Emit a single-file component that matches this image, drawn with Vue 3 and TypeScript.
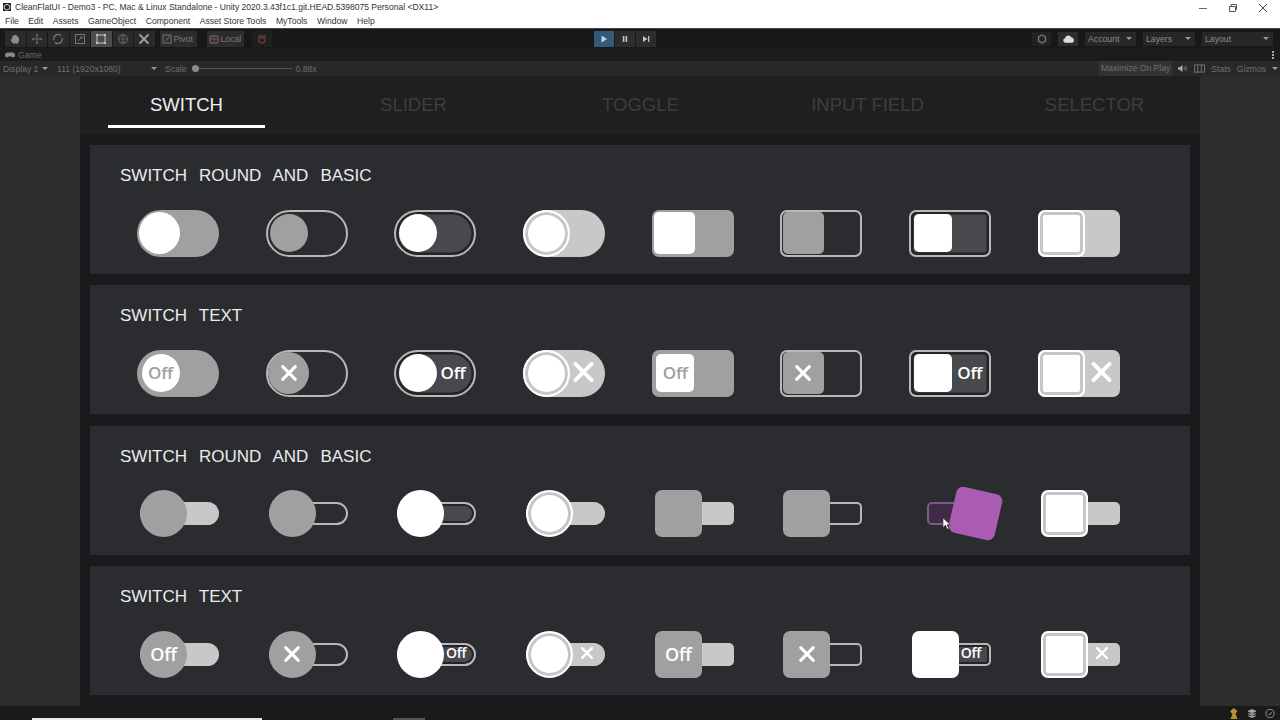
<script setup lang="ts">
type Style = 'fill' | 'outline' | 'inset' | 'ring'
type Label = 'none' | 'off' | 'x'

interface Cell {
  look: Style
  square: boolean
  label: Label
  moving?: boolean
}

interface Row {
  title: string
  small: boolean
  label: boolean
}

const rows: Row[] = [
  { title: 'SWITCH ROUND AND BASIC', small: false, label: false },
  { title: 'SWITCH TEXT', small: false, label: true },
  { title: 'SWITCH ROUND AND BASIC', small: true, label: false },
  { title: 'SWITCH TEXT', small: true, label: true }
]

const looks: Style[] = ['fill', 'outline', 'inset', 'ring']

function cellsFor(rowIndex: number, row: Row): Cell[] {
  const cells: Cell[] = []
  for (const square of [false, true]) {
    looks.forEach((look) => {
      let label: Label = 'none'
      if (row.label) label = look === 'fill' || look === 'inset' ? 'off' : 'x'
      cells.push({
        look,
        square,
        label,
        moving: rowIndex === 2 && square && look === 'inset'
      })
    })
  }
  return cells
}

const tabs = ['SWITCH', 'SLIDER', 'TOGGLE', 'INPUT FIELD', 'SELECTOR']
const menus = ['File', 'Edit', 'Assets', 'GameObject', 'Component', 'Asset Store Tools', 'MyTools', 'Window', 'Help']

// label sits on the knob for fill/outline, on the track for inset/ring
const onKnob = (c: Cell) => c.look === 'fill' || c.look === 'outline'
</script>

<template>
  <div class="editor">
    <header class="titlebar">
      <div class="title-left">
        <svg class="unity-logo" viewBox="0 0 10 10"><rect width="10" height="10" fill="#222" /><path d="M5 1.5 8.5 3.5V7L5 8.8 1.5 7V3.5Z" fill="none" stroke="#fff" stroke-width="1" /></svg>
        <span>CleanFlatUI - Demo3 - PC, Mac &amp; Linux Standalone - Unity 2020.3.43f1c1.git.HEAD.5398075 Personal &lt;DX11&gt;</span>
      </div>
      <div class="window-btns">
        <svg viewBox="0 0 10 10"><path d="M1 5.5H9" stroke="#666" /></svg>
        <svg viewBox="0 0 10 10"><path d="M1.5 3.5H7.5V8.5H1.5ZM3 3.5V1.500H8.500V6.500H7.500" fill="none" stroke="#555" /></svg>
        <svg viewBox="0 0 10 10"><path d="M1 1 9 9M9 1 1 9" stroke="#444" /></svg>
      </div>
    </header>
    <nav class="menubar">
      <span v-for="m in menus" :key="m">{{ m }}</span>
    </nav>

    <div class="toolbar">
      <div class="tools">
        <span class="tool"><svg viewBox="0 0 12 12"><path d="M3 7V3.500H4V2.500H5V2H7V2.500H8V3.500H9V4.500H10V7.500L9 10.500H4L1.500 7 2 6Z" fill="#8c8c8c" /></svg></span>
        <span class="tool"><svg viewBox="0 0 12 12"><path d="M6 1V11M1 6H11" stroke="#6c6c6c" /><path d="M6 .5 7.500 2.500H4.500ZM6 11.500 4.500 9.500H7.500ZM.5 6 2.500 4.500V7.500ZM11.500 6 9.500 7.500V4.500Z" fill="#6c6c6c" /></svg></span>
        <span class="tool"><svg viewBox="0 0 12 12"><path d="M2 7A4.200 4.200 0 0 1 9 2.800M10 5A4.200 4.200 0 0 1 3 9.200" fill="none" stroke="#7a7a7a" stroke-width="1.300" /></svg></span>
        <span class="tool"><svg viewBox="0 0 12 12"><rect x="1.500" y="1.500" width="9" height="9" fill="none" stroke="#777" /><path d="M4 8 8 4M6 4H8V6" fill="none" stroke="#777" /></svg></span>
        <span class="tool active"><svg viewBox="0 0 12 12"><rect x="2" y="2" width="8" height="8" fill="none" stroke="#c4c4c4" /><path d="M1 1H3V3H1ZM9 1H11V3H9ZM1 9H3V11H1ZM9 9H11V11H9Z" fill="#c4c4c4" /></svg></span>
        <span class="tool"><svg viewBox="0 0 12 12"><circle cx="6" cy="6" r="4.500" fill="none" stroke="#666" /><path d="M6 1V11M1 6H11M2.500 3H9.500M2.500 9H9.500" stroke="#666" stroke-width=".8" /></svg></span>
        <span class="tool"><svg viewBox="0 0 12 12"><path d="M1.500 1.500 10.500 10.500M10.500 1.500 1.500 10.500" stroke="#a0a0a0" stroke-width="1.800" /></svg></span>
      </div>
      <div class="pivot">
        <span class="pill"><svg viewBox="0 0 10 10"><rect x="1" y="1" width="8" height="8" fill="none" stroke="#777" /><path d="M3 7 8 2" stroke="#8a4f3e" stroke-width="1.300" /></svg>Pivot</span>
        <span class="pill"><svg viewBox="0 0 10 10"><rect x="1" y="2" width="8" height="7" rx="1" fill="none" stroke="#777" /><path d="M5 2V9M1 5H9" stroke="#8a4f3e" /></svg>Local</span>
        <span class="pill snap"><svg viewBox="0 0 10 10"><path d="M2 1V6A3 3 0 0 0 8 6V1M2 3H4M6 3H8M4 1V5M6 1V5" fill="none" stroke="#6e4236" stroke-width="1.100" /></svg></span>
      </div>
      <div class="play">
        <span class="play-btn on"><svg viewBox="0 0 10 10"><path d="M2.500 1.500 8 5 2.500 8.500Z" fill="#b4d4f0" /></svg></span>
        <span class="play-btn"><svg viewBox="0 0 10 10"><path d="M2.800 2H4.400V8H2.800ZM5.600 2H7.200V8H5.600Z" fill="#c4c4c4" /></svg></span>
        <span class="play-btn"><svg viewBox="0 0 10 10"><path d="M2 2 6.500 5 2 8ZM7 2H8.300V8H7Z" fill="#c4c4c4" /></svg></span>
      </div>
      <div class="right-tools">
        <span class="sq"><svg viewBox="0 0 10 10"><path d="M5 1 8.500 3V7L5 9 1.500 7V3Z" fill="none" stroke="#777" stroke-width="1.400" /></svg></span>
        <span class="sq cloud"><svg viewBox="0 0 12 8"><path d="M3 7.500A2.200 2.200 0 0 1 2.800 3.200 3.200 3.200 0 0 1 8.800 2.700 2.500 2.500 0 0 1 9.500 7.500Z" fill="#dcdcdc" /></svg></span>
        <span class="drop acc">Account<i /></span>
        <span class="drop lay">Layers<i /></span>
        <span class="drop lout">Layout<i /></span>
      </div>
    </div>

    <div class="game-tab">
      <span class="game-label">
        <svg viewBox="0 0 10 6"><path d="M2.500 .5H7.500A2.300 2.300 0 0 1 7.500 5.500L6.500 4.500H3.500L2.500 5.500A2.300 2.300 0 0 1 2.500 .5Z" fill="#8a8a8a" /></svg>
        Game
      </span>
      <span class="kebab"><i /><i /><i /></span>
    </div>
    <div class="game-bar">
      <div class="gb-left">
        <span class="gb-display">Display 1<i /></span>
        <span class="gb-res">111 (1920x1080)<i /></span>
        <span class="gb-scale">Scale</span>
        <span class="slider"><b /></span>
        <span class="gb-val">0.88x</span>
      </div>
      <div class="gb-right">
        <span class="gb-max">Maximize On Play</span>
        <svg class="gb-ico" viewBox="0 0 12 10"><path d="M1 3.500H3L6 1V9L3 6.500H1Z" fill="#aaa" /><path d="M8 3V7M10 2V8" stroke="#777" /></svg>
        <svg class="gb-ico" viewBox="0 0 12 10"><rect x=".5" y="1" width="11" height="8" fill="none" stroke="#777" /><path d="M4 1V9M8 1V9" stroke="#777" /></svg>
        <span class="gb-txt">Stats</span>
        <span class="gb-txt">Gizmos</span>
        <i class="gb-caret" />
      </div>
    </div>

    <main class="viewport">
      <div class="screen">
        <div class="tabbar">
          <div v-for="(t, i) in tabs" :key="t" class="tab" :class="{ selected: i === 0 }">{{ t }}</div>
        </div>
        <section v-for="(row, r) in rows" :key="r" class="card">
          <h2 class="card-title">{{ row.title }}</h2>
          <div class="switches">
            <div
              v-for="(c, i) in cellsFor(r, row)"
              :key="i"
              class="switch"
              :class="[c.look, { square: c.square, small: row.small, moving: c.moving, labelled: row.label }]"
            >
              <div class="track">
                <span v-if="c.label !== 'none' && !onKnob(c)" class="on-track">
                  <template v-if="c.label === 'off'">Off</template>
                  <svg v-else class="cross" viewBox="0 0 20 20"><path d="M3 3 17 17M17 3 3 17" /></svg>
                </span>
              </div>
              <div class="knob">
                <span v-if="c.label !== 'none' && onKnob(c)" class="on-knob">
                  <template v-if="c.label === 'off'">Off</template>
                  <svg v-else class="cross" viewBox="0 0 20 20"><path d="M3 3 17 17M17 3 3 17" /></svg>
                </span>
              </div>
            </div>
          </div>
          <svg v-if="r === 2" class="cursor" viewBox="0 0 12 16"><path d="M1 1V13L4 10 6.500 15 8.500 14 6 9.500H10Z" fill="#fff" stroke="#222" stroke-width=".8" /></svg>
        </section>
      </div>
    </main>

    <footer class="statusbar">
      <span class="progress" />
      <span class="progress-mid" />
      <div class="status-ico">
        <svg viewBox="0 0 9 11"><path d="M4 0 8 3 6 5.500 8 11H1L3 6 .5 3.500Z" fill="#b89238" /></svg>
        <svg viewBox="0 0 11 11"><path d="M5.500 1 10 3 5.500 5 1 3ZM1 5.500 5.500 7.500 10 5.500M1 8 5.500 10 10 8" fill="#aaa" stroke="#aaa" stroke-width=".8" /></svg>
        <svg viewBox="0 0 11 11"><circle cx="5.500" cy="5.500" r="4.500" fill="none" stroke="#999" /><path d="M3.500 5.500 5 7 7.500 4" fill="none" stroke="#aaa" /></svg>
      </div>
    </footer>
  </div>
</template>

<style scoped>
.editor {
  width: 1280px;
  height: 720px;
  overflow: hidden;
  display: flex;
  flex-direction: column;
  background: #1a1a1b;
  font-family: "Liberation Sans", Arial, sans-serif;
}
.editor > * {
  flex-shrink: 0;
}

.titlebar {
  height: 14px;
  background: #fff;
  display: flex;
  align-items: center;
  justify-content: space-between;
  color: #333;
  font-size: 8.550px;
}
.title-left {
  display: flex;
  align-items: center;
  gap: 4px;
  padding-left: 3px;
  white-space: nowrap;
}
.unity-logo {
  width: 8px;
  height: 8px;
}
.window-btns {
  display: flex;
  gap: 20px;
  padding-right: 12px;
  margin-top: 1px;
}
.window-btns svg {
  width: 10px;
  height: 10px;
}
.menubar {
  height: 14px;
  background: #fff;
  display: flex;
  align-items: center;
  gap: 9.500px;
  padding-left: 5px;
  color: #333;
  font-size: 8.600px;
  border-bottom: 1px solid #444;
}

.toolbar {
  height: 19px;
  background: #181818;
  display: flex;
  align-items: center;
  position: relative;
  padding-left: 5px;
  font-size: 8.700px;
}
.tools {
  display: flex;
  gap: 1px;
}
.tool {
  width: 20.500px;
  height: 16px;
  background: #2a2a2a;
  display: flex;
  align-items: center;
  justify-content: center;
}
.tool.active {
  background: #4c4c4c;
}
.tool svg {
  width: 12px;
  height: 12px;
}
.pivot {
  display: flex;
  gap: 10px;
  margin-left: 5px;
}
.pill {
  height: 16px;
  width: 37px;
  box-sizing: border-box;
  padding: 0 2px;
  background: #2c2c2c;
  color: #7a7a7a;
  display: flex;
  align-items: center;
  gap: 2px;
}
.pill svg {
  width: 10px;
  height: 10px;
}
.pill.snap {
  width: 20px;
  justify-content: center;
  background: #1f1f1f;
  margin-left: -2px;
}
.play {
  position: absolute;
  left: 594px;
  top: 2px;
  display: flex;
  gap: 1px;
}
.play-btn {
  width: 20px;
  height: 16px;
  background: #2c2c2c;
  display: flex;
  align-items: center;
  justify-content: center;
}
.play-btn.on {
  background: #35597a;
}
.play-btn svg {
  width: 10px;
  height: 10px;
}
.right-tools {
  margin-left: auto;
  display: flex;
  align-items: center;
  gap: 7px;
  padding-right: 7px;
  color: #8c8c8c;
}
.sq {
  width: 19px;
  height: 14px;
  background: #222;
  display: flex;
  align-items: center;
  justify-content: center;
}
.sq svg {
  width: 10px;
  height: 10px;
}
.cloud {
  width: 20px;
  background: #2c2c2c;
}
.cloud svg {
  width: 13px;
}
.drop {
  height: 14px;
  box-sizing: border-box;
  background: #272727;
  padding: 0 4px 0 3px;
  display: flex;
  align-items: center;
  justify-content: space-between;
}
.acc {
  width: 51px;
}
.lay {
  width: 52px;
}
.lout {
  width: 71px;
}
.drop i,
.gb-display i,
.gb-res i,
.gb-caret {
  width: 0;
  height: 0;
  border-left: 3px solid transparent;
  border-right: 3px solid transparent;
  border-top: 3px solid #999;
  display: block;
}

.game-tab {
  height: 13px;
  background: #1c1c1c;
  display: flex;
  align-items: center;
  justify-content: space-between;
  padding: 0 6px 0 5px;
  color: #6a6a6a;
  font-size: 8.700px;
}
.game-label {
  display: flex;
  align-items: center;
  gap: 3px;
}
.game-label svg {
  width: 10px;
  height: 6px;
}
.kebab {
  display: flex;
  flex-direction: column;
  gap: 1px;
}
.kebab i {
  width: 2px;
  height: 2px;
  background: #aaa;
  display: block;
}
.game-bar {
  height: 15px;
  background: #282828;
  display: flex;
  align-items: center;
  justify-content: space-between;
  color: #6f6f6f;
  font-size: 8.600px;
}
.gb-left {
  display: flex;
  align-items: center;
  padding-left: 3px;
}
.gb-display {
  width: 54px;
  display: flex;
  align-items: center;
  gap: 4px;
}
.gb-res {
  width: 100px;
  display: flex;
  align-items: center;
  justify-content: space-between;
}
.gb-scale {
  margin-left: 8px;
}
.slider {
  width: 100px;
  height: 1px;
  background: #555;
  margin-left: 5px;
  position: relative;
}
.slider b {
  position: absolute;
  left: 0;
  top: -3px;
  width: 7px;
  height: 7px;
  border-radius: 50%;
  background: #8a8a8a;
}
.gb-val {
  margin-left: 4px;
}
.gb-right {
  display: flex;
  align-items: center;
  gap: 6px;
  padding-right: 2px;
}
.gb-max {
  background: #333;
  padding: 0 2px;
  height: 15px;
  line-height: 15px;
  margin-right: -1px;
}
.gb-ico {
  width: 11px;
  height: 9px;
}

.editor > .viewport {
  flex: 1 1 0;
  min-height: 0;
  overflow: hidden;
  background: #2d2d2d;
  display: flex;
  justify-content: center;
}
.screen {
  width: 1120px;
  box-sizing: border-box;
  background: #1a1a1c;
  display: flex;
  flex-direction: column;
  align-items: stretch;
  padding: 0 10px;
}
.tabbar {
  height: 58px;
  flex-shrink: 0;
  margin: 0 -10px 11.100px;
  padding: 0 27px 0 28px;
  background: #1f1f20;
  display: grid;
  grid-template-columns: repeat(5, 157px);
  column-gap: 70px;
}
.tab {
  font-size: 18.500px;
  color: #3d3d3e;
  text-align: center;
  padding-top: 18px;
}
.tab.selected {
  color: #f0f0f0;
  border-bottom: 3px solid #fff;
  height: 52px;
  box-sizing: border-box;
}

.card {
  position: relative;
  height: 129px;
  margin-bottom: 11.400px;
  background: #2a2c30;
  flex-shrink: 0;
}
.card-title {
  margin: 0;
  padding: 21px 0 0 30px;
  font-weight: 400;
  font-size: 17px;
  line-height: 20px;
  color: #ececec;
  word-spacing: 7.300px;
}
.switches {
  display: grid;
  grid-template-columns: repeat(8, 82px);
  column-gap: 46.700px;
  padding: 23.500px 0 0 47px;
}

.switch {
  position: relative;
  width: 82px;
  height: 47px;
}
.track {
  position: absolute;
  inset: 0;
  box-sizing: border-box;
  border-radius: 24px;
  overflow: hidden;
}
.knob {
  position: absolute;
  box-sizing: border-box;
  left: 4.500px;
  top: 4.500px;
  width: 38px;
  height: 38px;
  border-radius: 50%;
  display: flex;
  align-items: center;
  justify-content: center;
}
.switch.square .track {
  border-radius: 7px;
}
.switch.square .knob {
  border-radius: 5px;
}

/* looks */
.fill .track {
  background: #a0a0a0;
}
.fill .knob {
  background: #fff;
  left: 2px;
  top: 2.500px;
  width: 41px;
  height: 42px;
}
.fill.labelled .knob {
  left: 4.500px;
  top: 4.500px;
  width: 38px;
  height: 38px;
}
.outline .track {
  border: 2px solid #b8b8b8;
}
.outline .knob {
  background: #a0a0a0;
}
.outline.labelled .knob,
.square.outline .knob {
  left: 2.500px;
  top: 2.500px;
  width: 41px;
  height: 42px;
}
.inset .track {
  border: 2px solid #b8b8b8;
  background: #47494c;
  box-shadow: inset 0 0 0 2.500px #232427;
}
.inset .knob {
  background: #fff;
}
.ring .track {
  background: #c8c8c8;
}
.ring .knob {
  left: 0;
  top: 0;
  width: 47px;
  height: 47px;
  background: #fff;
  border: 2px solid #fff;
  box-shadow: inset 0 0 0 3px #c6c6c6;
}
.switch.square.ring .knob {
  border-radius: 7px;
}

/* small track, knob sticking out */
.small .track {
  left: 3px;
  top: 12px;
  bottom: 12px;
  right: 0;
}
.switch.square.small .track {
  border-radius: 5px;
}
.switch.small .knob {
  left: 3px;
  top: 0;
  width: 47px;
  height: 47px;
  border-radius: 50%;
}
.switch.square.small .knob {
  border-radius: 7px;
}
.small.fill .track {
  background: #c8c8c8;
}
.small.fill .knob,
.small.outline .knob {
  background: #a0a0a0;
}
.small.inset .track {
  box-shadow: inset 0 0 0 2px #232427;
}

/* mid-animation switch under the mouse */
.switch.moving .track {
  left: 18px;
  right: auto;
  width: 40px;
  border-color: #7c5a84;
  background: #3f2a47;
  box-shadow: none;
}
.switch.small.moving .knob {
  left: 42.500px;
  background: #a95cb2;
  transform: rotate(13deg);
}

/* labels */
.on-knob,
.on-track {
  font-family: "Open Sans", "Liberation Sans", sans-serif;
  font-weight: 600;
  font-size: 17px;
  line-height: 1;
  letter-spacing: -0.3px;
}
.on-knob {
  margin-top: -1px;
}
.on-track {
  position: absolute;
  right: 7px;
  top: 50%;
  transform: translateY(calc(-50% - 1px));
  color: #fff;
  display: flex;
}
.inset:not(.square) .on-track {
  right: 9px;
}
.ring:not(.square) .on-track {
  right: 10px;
}
.fill .on-knob {
  color: #a0a0a0;
}
.small.fill .on-knob {
  color: #fff;
  font-size: 18px;
}
.small .on-track,
.switch.small.inset .on-track {
  font-size: 14px;
  right: 8px;
}
.switch.small.ring .on-track {
  right: 11px;
}
.cross {
  width: 18px;
  height: 18px;
  display: block;
}
.ring .cross {
  width: 23px;
  height: 23px;
}
.small.ring .cross {
  width: 14px;
  height: 14px;
}
.cross path {
  fill: none;
  stroke: #fff;
  stroke-width: 3.400;
  stroke-linecap: round;
}

.cursor {
  position: absolute;
  left: 852px;
  top: 91px;
  width: 10px;
  height: 13px;
}

.statusbar {
  height: 14px;
  background: #1a1a1a;
  position: relative;
  display: flex;
  justify-content: flex-end;
  align-items: center;
}
.progress {
  position: absolute;
  left: 32px;
  bottom: 0;
  width: 230px;
  height: 2px;
  background: #e8e8e8;
}
.progress-mid {
  position: absolute;
  left: 393px;
  bottom: 0;
  width: 32px;
  height: 2px;
  background: #555;
}
.status-ico {
  display: flex;
  gap: 8px;
  align-items: center;
  padding-right: 5px;
}
.status-ico svg {
  height: 11px;
  width: 10px;
}
</style>

<style>
html,
body {
  background: #1a1a1b;
}
</style>
